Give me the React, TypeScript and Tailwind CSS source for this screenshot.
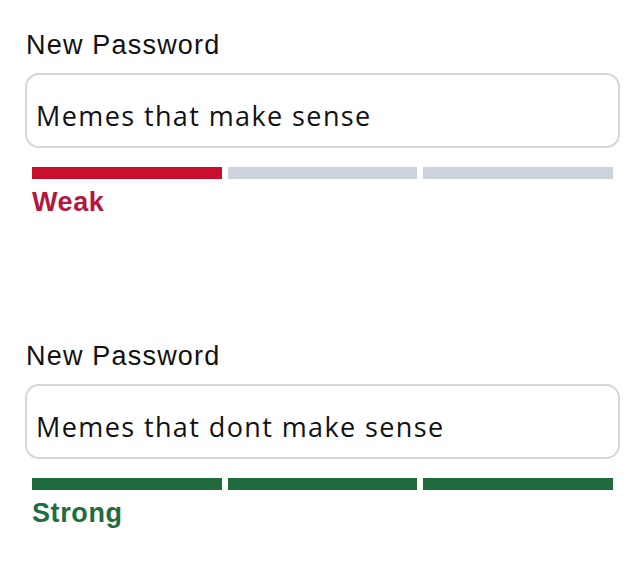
import React from 'react';

type Strength = 'weak' | 'strong';

interface PasswordFieldProps {
  value: string;
  strength: Strength;
  className?: string;
}

// three segments, filled according to how strong the password is
const levels: Record<Strength, { filled: number; label: string; bar: string; text: string }> = {
  weak: { filled: 1, label: 'Weak', bar: 'bg-[#c8102e]', text: 'text-[#b3163f]' },
  strong: { filled: 3, label: 'Strong', bar: 'bg-[#1f6b3e]', text: 'text-[#216b40]' },
};

const PasswordField: React.FC<PasswordFieldProps> = ({ value, strength, className }) => {
  const level = levels[strength];

  return (
    <div className={`w-[595px] ${className ?? ''}`}>
      <label className="block pl-[1px] text-[27px] leading-[30px] tracking-[1.2px] text-[#111] font-['Liberation_Sans',Arial,sans-serif]">
        New Password
      </label>

      <div className="mt-[13px] h-[75px] rounded-[14px] border-2 border-[#d6d6d8] bg-white pl-[9px] pt-[23px]">
        <p className="text-[27px] leading-[36px] tracking-[1.4px] text-[#111] font-['Open_Sans','Noto_Sans',sans-serif]">
          {value}
        </p>
      </div>

      <div className="mx-[7px] mt-[19px] flex gap-[6px]">
        {[0, 1, 2].map(i => (
          <div key={i} className={`h-[12px] flex-1 ${i < level.filled ? level.bar : 'bg-[#cdd3dc]'}`} />
        ))}
      </div>

      <p className={`ml-[7px] mt-[8px] text-[27px] font-bold leading-[30px] tracking-[0.6px] font-['Liberation_Sans',Arial,sans-serif] ${level.text}`}>
        {level.label}
      </p>
    </div>
  );
};

export default function App() {
  return (
    <div className="h-[567px] w-[640px] overflow-hidden bg-white pl-[25px] pt-[30px]">
      <PasswordField value="Memes that make sense" strength="weak" />
      <PasswordField value="Memes that dont make sense" strength="strong" className="mt-[124px]" />
    </div>
  );
}
